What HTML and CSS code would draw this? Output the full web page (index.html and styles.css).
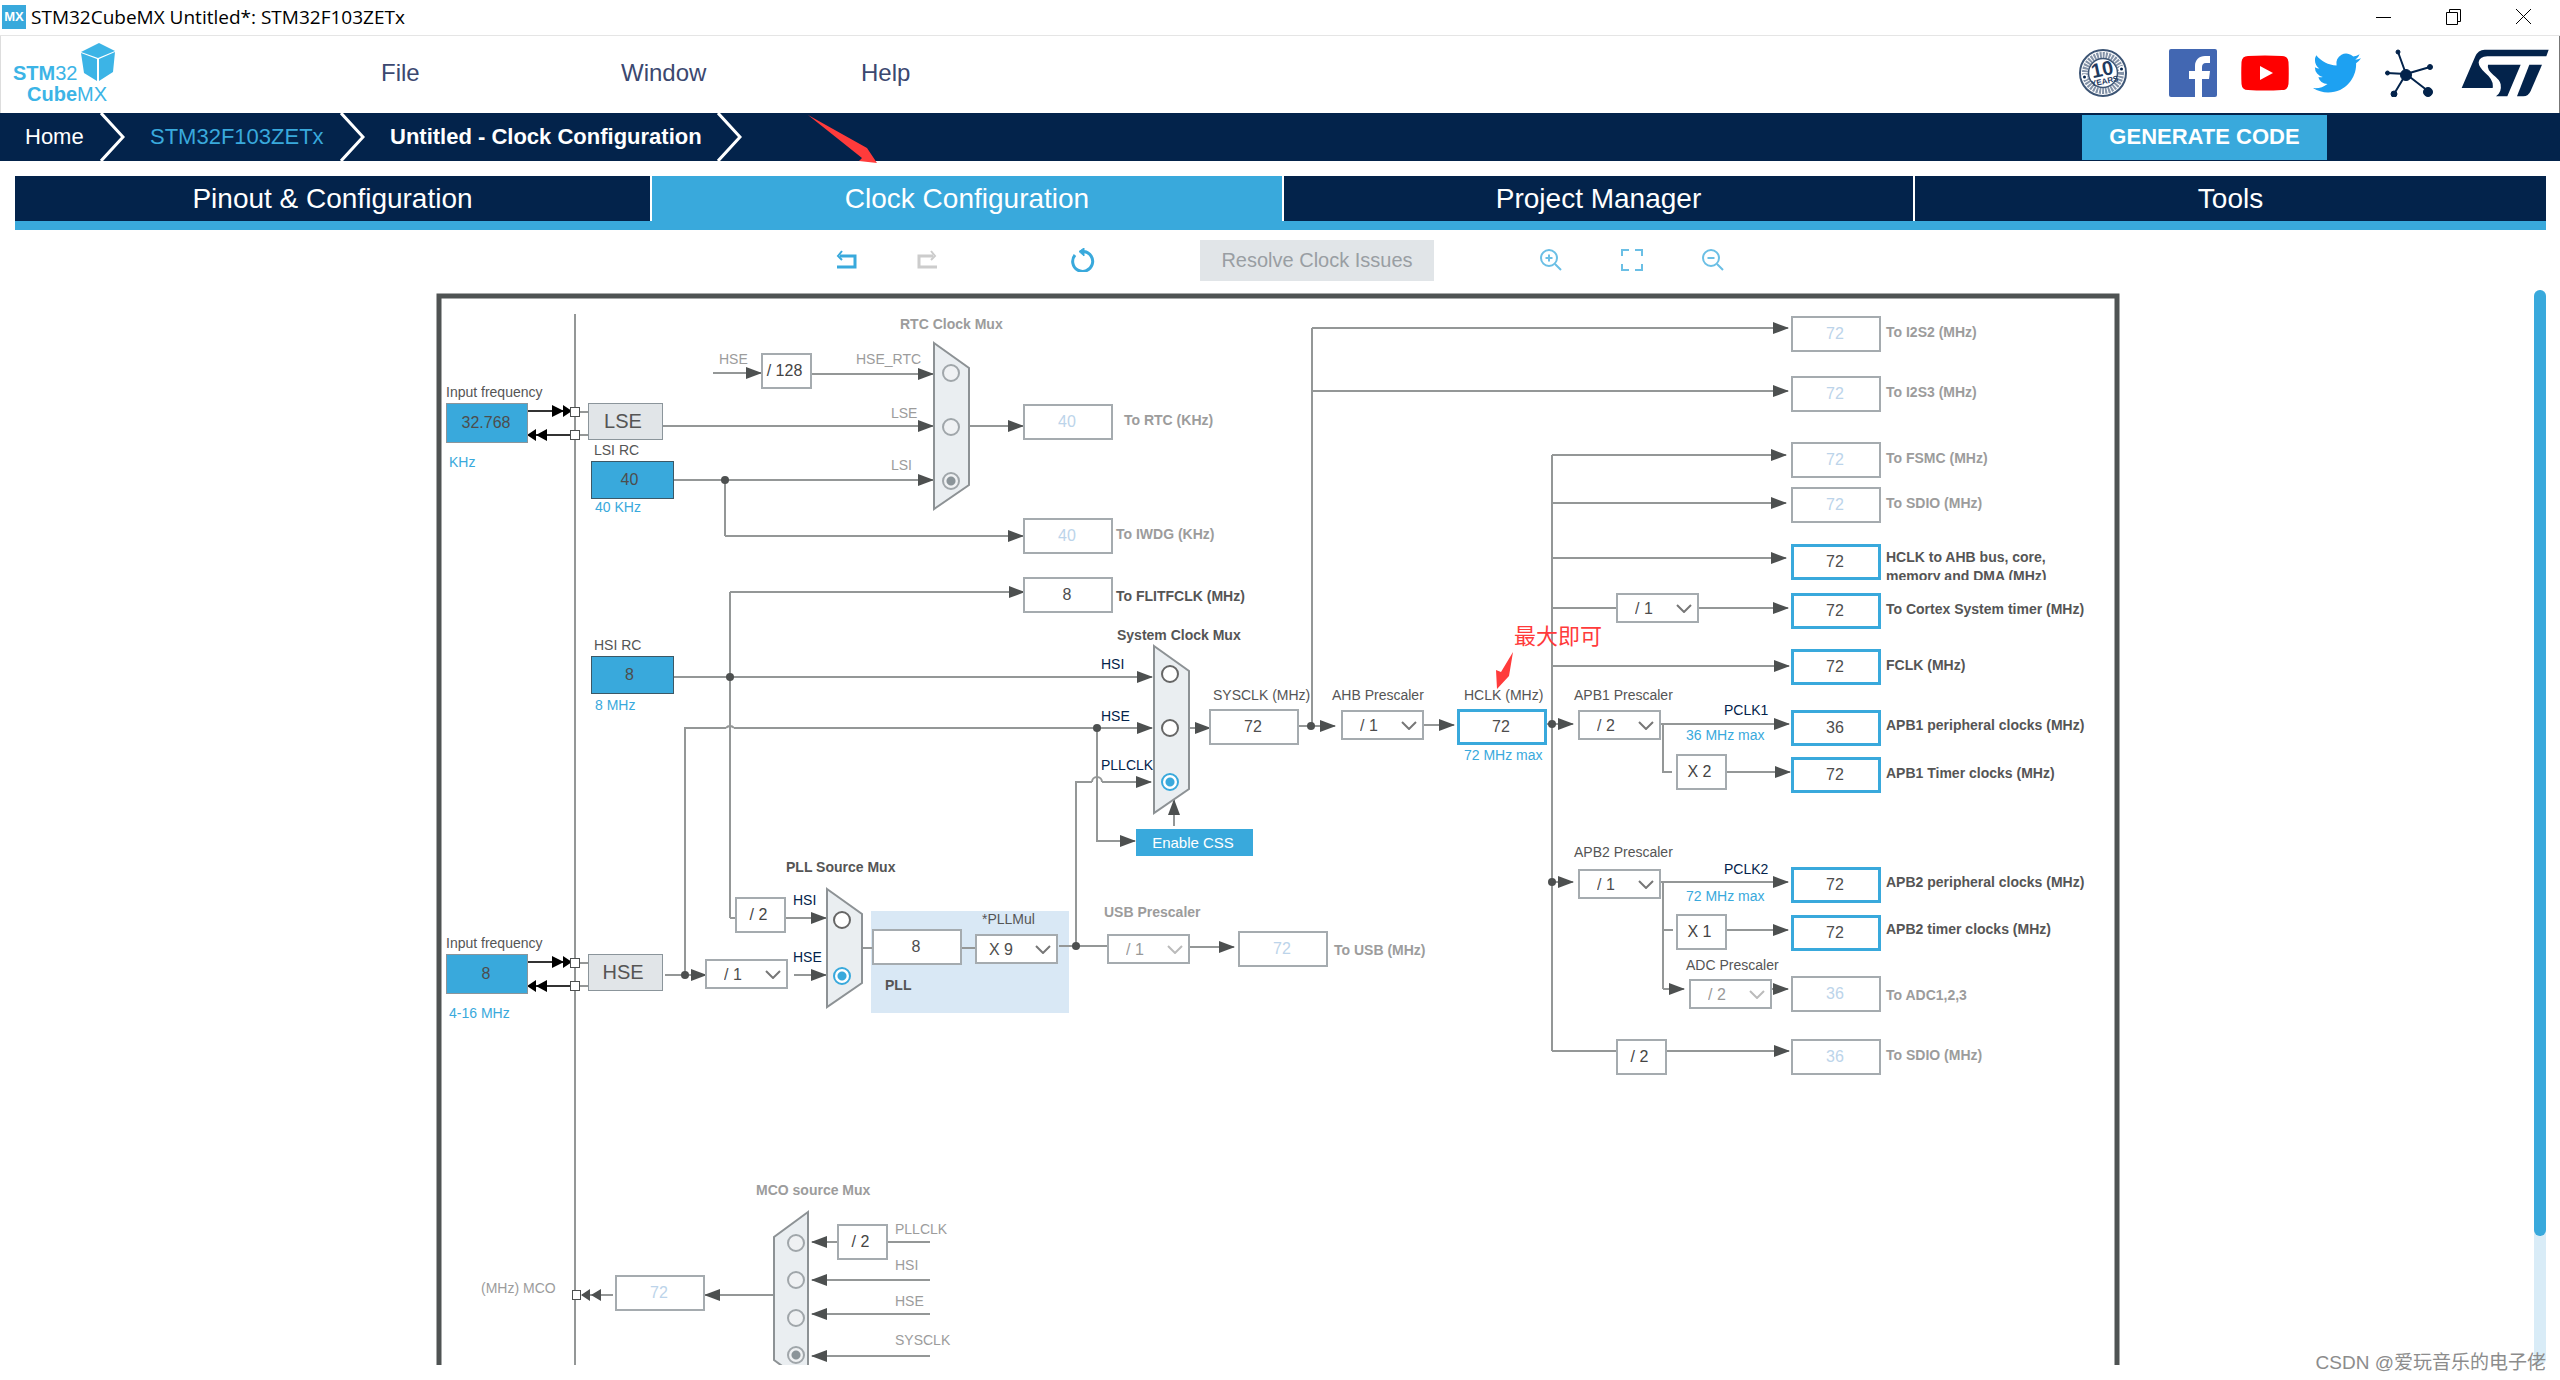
FILE: index.html
```
<!DOCTYPE html>
<html lang="en">
<head>
<meta charset="utf-8">
<title>STM32CubeMX Untitled*: STM32F103ZETx</title>
<link rel="stylesheet" href="styles.css">
</head>
<body>
<div class="app">
  <div class="titlebar">
    <span class="app-icon">MX</span>
    <span class="app-title">STM32CubeMX Untitled*: STM32F103ZETx</span>
    <div class="win-controls">
      <button aria-label="Minimize"><svg width="16" height="16"><path d="M0 8.500H15" stroke="#000" fill="none"/></svg></button>
      <button aria-label="Restore"><svg width="16" height="16"><path d="M.5 3.500H11.500V15.500H.5ZM3.500 3V.5H14.500V12.500H12" stroke="#000" fill="none"/></svg></button>
      <button aria-label="Close"><svg width="16" height="16"><path d="M0 0L15 15M15 0L0 15" stroke="#000" fill="none"/></svg></button>
    </div>
  </div>

  <header class="header">
    <a class="logo" href="#" aria-label="STM32CubeMX">
      <span class="logo-top"><b>STM</b>32</span>
      <span class="logo-bottom"><b>Cube</b>MX</span>
      <svg class="logo-cube" viewBox="0 0 34 38" width="34" height="38"><path d="M18 0L34 8 17 15 0 9Z" fill="#3cb4e6"/><path d="M0 10L16 16V38L3 30ZM34 9L18 16V38L32 29Z" fill="#3cb4e6"/></svg>
    </a>
    <nav class="menu">
      <button>File</button><button>Window</button><button>Help</button>
    </nav>
    <div class="links">
      <a class="badge" href="#" aria-label="10 years longevity commitment">
        <svg viewBox="0 0 48 48" width="48" height="48">
          <circle cx="24" cy="24" r="23" fill="#fff" stroke="#3d5575" stroke-width="2"/>
          <circle cx="24" cy="24" r="18" fill="none" stroke="#8493a8" stroke-width="6" stroke-dasharray="2 1"/>
          <circle cx="24" cy="24" r="14.500" fill="#fff" stroke="#3d5575" stroke-width="1.500"/>
          <circle cx="5.500" cy="28" r="3" fill="#fff"/><circle cx="42.500" cy="20" r="3" fill="#fff"/>
          <circle cx="5.500" cy="28" r="1.500" fill="#03234b"/><circle cx="42.500" cy="20" r="1.500" fill="#03234b"/>
          <g transform="rotate(-12 24 24)" fill="#1f3a5f" text-anchor="middle" font-family="Liberation Sans, sans-serif" font-weight="700"><text x="24" y="27" font-size="20">10</text><text x="24" y="35" font-size="8">YEARS</text></g>
        </svg>
      </a>
      <a href="#" aria-label="Facebook"><svg viewBox="0 0 48 48" width="48" height="48"><rect width="48" height="48" rx="2" fill="#4267b2"/><path d="M26 48V30H20V22H26V17C26 11 30 7 36 7H41V14H37C34 14 33 16 33 18V22H41L40 30H33V48Z" fill="#fff"/></svg></a>
      <a href="#" aria-label="YouTube"><svg viewBox="0 0 48 48" width="48" height="48"><path d="M7 7Q24 6 41 7Q47 7 47.500 13Q48 24 47.500 35Q47 41 41 41Q24 42 7 41Q1 41 .5 35Q0 24 .5 13Q1 7 7 7Z" fill="#f00"/><path d="M19 17L32 24 19 31Z" fill="#fff"/></svg></a>
      <a href="#" aria-label="Twitter"><svg viewBox="0 0 24 24" width="48" height="48"><path d="M23.953 4.57a10 10 0 01-2.825.775 4.958 4.958 0 002.163-2.723c-.951.555-2.005.959-3.127 1.184a4.92 4.92 0 00-8.384 4.482C7.69 8.095 4.067 6.13 1.64 3.162a4.822 4.822 0 00-.666 2.475c0 1.710.87 3.213 2.188 4.096a4.904 4.904 0 01-2.228-.616v.06a4.923 4.923 0 003.946 4.827 4.996 4.996 0 01-2.212.085 4.936 4.936 0 004.604 3.417 9.867 9.867 0 01-6.102 2.105c-.39 0-.779-.023-1.170-.067a13.995 13.995 0 007.557 2.209c9.053 0 13.998-7.496 13.998-13.985 0-.21 0-.42-.015-.63A9.935 9.935 0 0024 4.590z" fill="#1da1f2"/></svg></a>
      <a href="#" aria-label="ST Community"><svg viewBox="0 0 48 48" width="48" height="48" fill="#03234b" stroke="#03234b"><path d="M21 25L13 3M21 25L45 18M21 25L2 24M21 25L9 45M21 25L43 42" stroke-width="2"/><circle cx="21" cy="26" r="5.500"/><circle cx="13" cy="3" r="2"/><circle cx="45" cy="18" r="2.500"/><circle cx="2.500" cy="24" r="2"/><circle cx="9" cy="45" r="3"/><circle cx="43" cy="43" r="4.500"/></svg></a>
      <a class="st" href="#" aria-label="STMicroelectronics"><svg viewBox="1204 60 262 144" width="88" height="48" fill="#03234b"><path d="M1205 177L1246 82Q1254 63 1274 62H1466L1459 82H1282Q1258 84 1256 99Q1255 112 1276 132Q1302 153 1298 177Z"/><path d="M1284 107H1382L1342 202H1308Q1326 190 1322 166Q1320 153 1300 138Q1280 120 1284 107Z"/><path d="M1408 107H1446L1412 186Q1405 202 1390 202H1371Z"/></svg></a>
    </div>
  </header>

  <div class="crumbs">
    <a class="crumb crumb-home" href="#">Home</a>
    <svg class="sep" width="25" height="48" viewBox="0 0 25 48"><path d="M1 0L23 24 1 48" fill="none" stroke="#fff" stroke-width="3"/></svg>
    <a class="crumb crumb-mcu" href="#">STM32F103ZETx</a>
    <svg class="sep" width="25" height="48" viewBox="0 0 25 48"><path d="M1 0L23 24 1 48" fill="none" stroke="#fff" stroke-width="3"/></svg>
    <a class="crumb crumb-here" href="#">Untitled - Clock Configuration</a>
    <svg class="sep" width="25" height="48" viewBox="0 0 25 48"><path d="M1 0L23 24 1 48" fill="none" stroke="#fff" stroke-width="3"/></svg>
    <button class="generate">GENERATE CODE</button>
    <svg class="note-arrow" width="70" height="50" viewBox="0 0 70 50"><path d="M0 0L59 33 69 48 51 46 54 43Z" fill="#ff3b3b"/></svg>
  </div>

  <div class="tabs">
    <button class="tab">Pinout &amp; Configuration</button>
    <button class="tab active">Clock Configuration</button>
    <button class="tab">Project Manager</button>
    <button class="tab">Tools</button>
  </div>

  <div class="toolbar">
    <button class="tool undo" aria-label="Undo"><svg width="24" height="24" viewBox="0 0 24 24" fill="none" stroke="#39a9dc" stroke-width="3"><path d="M2 19H20V8H5"/><path d="M7 3L3 8 7 12" stroke-width="2"/></svg></button>
    <button class="tool redo" aria-label="Redo"><svg width="24" height="24" viewBox="0 0 24 24" fill="none" stroke="#ccc" stroke-width="3"><path d="M22 19H4V8H18"/><path d="M16 3L20 8 16 12" stroke-width="2"/></svg></button>
    <button class="tool reset" aria-label="Reset"><svg width="24" height="24" viewBox="0 0 24 24" fill="none" stroke="#39a9dc" stroke-width="3"><path d="M4 7A10 10 0 1 0 13 3.500"/><path d="M13 0L8 3.500 13 8Z" fill="#39a9dc" stroke-width="1"/></svg></button>
    <button class="resolve" disabled>Resolve Clock Issues</button>
    <button class="tool zin" aria-label="Zoom in"><svg width="24" height="24" viewBox="0 0 24 24" fill="none" stroke="#6bbfe5" stroke-width="2"><circle cx="10" cy="10" r="8"/><path d="M16 16L22 22M10 6.500V13.500M6.500 10H13.500"/></svg></button>
    <button class="tool fit" aria-label="Fit"><svg width="24" height="24" viewBox="0 0 24 24" fill="none" stroke="#6bbfe5" stroke-width="2"><path d="M2 8V2H9M15 2H22V8M22 16V22H15M9 22H2V16"/></svg></button>
    <button class="tool zout" aria-label="Zoom out"><svg width="24" height="24" viewBox="0 0 24 24" fill="none" stroke="#6bbfe5" stroke-width="2"><circle cx="10" cy="10" r="8"/><path d="M16 16L22 22M6.500 10H13.500"/></svg></button>
  </div>

  <main class="workspace">
    <div class="canvas">
      <svg class="wires" width="1760" height="1075" viewBox="0 0 1760 1075">
        <defs>
          <marker id="ar" viewBox="0 0 16 12" markerWidth="16" markerHeight="12" refX="15" refY="6" orient="auto" markerUnits="userSpaceOnUse"><path d="M0 0L16 6 0 12Z" fill="#4d5050"/></marker>
        </defs>
        <path class="frame" d="M39 1075V6H1717V1075"/>
        <rect x="471" y="621" width="198" height="102" fill="#d9e8f5"/>
        <g class="wire">
          <path d="M175 24V1075M175 122H188M175 145H188M175 673H188M175 696H188"/>
          <path d="M325 190V246M330 628H336M330 302V628M285 685V438H326M334 438H697M326 438A5 5 0 0 1 334 438"/>
          <path d="M462 658H472M561 658H576M659 656H707M676 656V492H692M692 492A5 5 0 0 1 702 492"/>
          <path d="M912 436V38M1152 761V165M1152 761H1216M1152 318H1216M1263 434V482H1272M1263 592V699M1263 640H1273M488 952H530M213 1005H182"/>
        </g>
        <g class="wire go">
          <path d="M313 83H361"/><path d="M412 84H533"/><path d="M263 136H533"/><path d="M274 190H533"/><path d="M325 246H623"/><path d="M330 302H624"/><path d="M569 136H623"/>
          <path d="M274 387H752"/><path d="M697 438H752"/><path d="M702 492H751"/><path d="M697 438V551H735"/><path d="M774 536V510"/>
          <path d="M789 438H810"/><path d="M899 436H935"/><path d="M1024 435H1054"/><path d="M1147 434H1173"/><path d="M1152 592H1173"/>
          <path d="M912 38H1388"/><path d="M912 101H1388"/><path d="M1152 165H1386"/><path d="M1152 213H1386"/><path d="M1152 268H1386"/><path d="M1299 318H1388"/><path d="M1152 376H1389"/>
          <path d="M1261 434H1389"/><path d="M1327 482H1390"/><path d="M1261 592H1388"/><path d="M1327 640H1388"/><path d="M1263 699H1284"/><path d="M1372 699H1388"/><path d="M1267 761H1389"/>
          <path d="M265 685H306"/><path d="M394 685H426"/><path d="M386 628H426"/><path d="M790 657H834"/>
          <path d="M438 952H412"/><path d="M530 990H412"/><path d="M530 1024H412"/><path d="M530 1066H412"/><path d="M374 1005H305"/>
        </g>
        <g fill="#4d5050"><circle cx="325" cy="190" r="4"/><circle cx="330" cy="387" r="4"/><circle cx="285" cy="685" r="4"/><circle cx="676" cy="656" r="4"/><circle cx="697" cy="438" r="4"/><circle cx="911" cy="436" r="4"/><circle cx="1152" cy="434" r="4"/><circle cx="1152" cy="592" r="4"/><path d="M190 999L181 1005 190 1011ZM201 999L191 1005 201 1011Z"/></g>
        <g stroke="#333" stroke-width="2"><path d="M128 121H165M128 672H165M171 145H135M171 696H135"/></g>
        <path d="M152 115L164 121 152 127ZM163 115L172 121 163 127ZM147 139L136 145 147 151ZM136 139L127 145 136 151ZM152 666L164 672 152 678ZM163 666L172 672 163 678ZM147 690L136 696 147 702ZM136 690L127 696 136 702Z"/>
        <g fill="#fff" stroke="#4d5050"><rect x="170.500" y="117.500" width="9" height="9"/><rect x="170.500" y="140.500" width="9" height="9"/><rect x="170.500" y="668.500" width="9" height="9"/><rect x="170.500" y="691.500" width="9" height="9"/><rect x="172.500" y="1000.500" width="8" height="9"/></g>
        <g class="mux">
          <path d="M534 53L569 78V195L534 219Z"/><path d="M754 356L789 381V499L754 523Z"/><path d="M427 599L462 624V693L427 717Z"/><path d="M408 922L374 947V1070L408 1095Z"/>
        </g>
        <path d="M1113 362L1109 386 1097 399 1096 380 1101 382Z" fill="#ff3b3b"/>
      </svg>

      <label class="t" for="lse-in" style="--x:46;--y:102">Input frequency</label>
      <input class="val src" id="lse-in" value="32.768" style="--x:46;--y:113">
      <span class="t blue" style="--x:49;--y:172">KHz</span>
      <button class="osc" style="--x:188;--y:113">LSE</button>
      <label class="t" for="lsi" style="--x:194;--y:160">LSI RC</label>
      <input class="val rc" id="lsi" value="40" readonly style="--x:191;--y:171">
      <span class="t blue" style="--x:195;--y:217">40 KHz</span>
      <label class="t" for="hsi" style="--x:194;--y:355">HSI RC</label>
      <input class="val rc" id="hsi" value="8" readonly style="--x:191;--y:366">
      <span class="t blue" style="--x:195;--y:415">8 MHz</span>
      <label class="t" for="hse-in" style="--x:46;--y:653">Input frequency</label>
      <input class="val src" id="hse-in" value="8" style="--x:46;--y:664">
      <span class="t blue" style="--x:49;--y:723">4-16 MHz</span>
      <button class="osc" style="--x:188;--y:664">HSE</button>

      <span class="t gray" style="--x:319;--y:69">HSE</span>
      <span class="div" style="--x:361;--y:63">/ 128</span>
      <span class="t gray b" style="--x:500;--y:34">RTC Clock Mux</span>
      <label class="t gray" for="rtc1" style="--x:456;--y:69">HSE_RTC</label>
      <label class="t gray" for="rtc2" style="--x:491;--y:123">LSE</label>
      <label class="t gray" for="rtc3" style="--x:491;--y:175">LSI</label>
      <input type="radio" name="rtc" id="rtc1" disabled style="--x:542;--y:74">
      <input type="radio" name="rtc" id="rtc2" disabled style="--x:542;--y:128">
      <input type="radio" name="rtc" id="rtc3" disabled checked style="--x:542;--y:182">
      <input class="val" id="o-rtc" value="40" disabled style="--x:623;--y:114">
      <label class="t gray b" for="o-rtc" style="--x:724;--y:130">To RTC (KHz)</label>
      <input class="val" id="o-iwdg" value="40" disabled style="--x:623;--y:228">
      <label class="t gray b" for="o-iwdg" style="--x:716;--y:244">To IWDG (KHz)</label>
      <input class="val" id="o-flit" value="8" readonly style="--x:623;--y:287">
      <label class="t b" for="o-flit" style="--x:716;--y:306">To FLITFCLK (MHz)</label>

      <span class="t b" style="--x:717;--y:345">System Clock Mux</span>
      <label class="t navy" for="sys1" style="--x:701;--y:374">HSI</label>
      <label class="t navy" for="sys2" style="--x:701;--y:426">HSE</label>
      <label class="t navy" for="sys3" style="--x:701;--y:475">PLLCLK</label>
      <input type="radio" name="sys" id="sys1" style="--x:761;--y:375">
      <input type="radio" name="sys" id="sys2" style="--x:761;--y:429">
      <input type="radio" name="sys" id="sys3" checked style="--x:761;--y:483">
      <button class="css" style="--x:736;--y:539">Enable CSS</button>

      <label class="t" for="sysclk" style="--x:813;--y:405">SYSCLK (MHz)</label>
      <input class="val" id="sysclk" value="72" readonly style="--x:809;--y:419">
      <label class="t" for="ahb" style="--x:932;--y:405">AHB Prescaler</label>
      <select id="ahb" style="--x:941;--y:420"><option>/ 1</option></select>
      <label class="t" for="hclk" style="--x:1064;--y:405">HCLK (MHz)</label>
      <input class="val hot" id="hclk" value="72" style="--x:1057;--y:419">
      <span class="t blue" style="--x:1064;--y:465">72 MHz max</span>
      <span class="note" style="--x:1114;--y:344">最大即可</span>

      <span class="t b" style="--x:386;--y:577">PLL Source Mux</span>
      <span class="div" style="--x:335;--y:607">/ 2</span>
      <label class="t navy" for="pll1" style="--x:393;--y:610">HSI</label>
      <label class="t navy" for="pll2" style="--x:393;--y:667">HSE</label>
      <input type="radio" name="pll" id="pll1" style="--x:433;--y:621">
      <input type="radio" name="pll" id="pll2" checked style="--x:433;--y:677">
      <select aria-label="HSE divider" style="--x:305;--y:669"><option>/ 1</option></select>
      <input class="val" id="pllin" value="8" readonly style="--x:472;--y:639">
      <label class="t" for="pllmul" style="--x:582;--y:629">*PLLMul</label>
      <select id="pllmul" class="mul" style="--x:575;--y:644"><option>X 9</option></select>
      <label class="t b" for="pllin" style="--x:485;--y:695">PLL</label>
      <label class="t gray b" for="usbp" style="--x:704;--y:622">USB Prescaler</label>
      <select id="usbp" disabled style="--x:707;--y:644"><option>/ 1</option></select>
      <input class="val" id="o-usb" value="72" disabled style="--x:838;--y:641">
      <label class="t gray b" for="o-usb" style="--x:934;--y:660">To USB (MHz)</label>

      <input class="val" id="o1" value="72" disabled style="--x:1391;--y:26">
      <label class="t gray b" for="o1" style="--x:1486;--y:42">To I2S2 (MHz)</label>
      <input class="val" id="o2" value="72" disabled style="--x:1391;--y:86">
      <label class="t gray b" for="o2" style="--x:1486;--y:102">To I2S3 (MHz)</label>
      <input class="val" id="o3" value="72" disabled style="--x:1391;--y:152">
      <label class="t gray b" for="o3" style="--x:1486;--y:168">To FSMC (MHz)</label>
      <input class="val" id="o4" value="72" disabled style="--x:1391;--y:197">
      <label class="t gray b" for="o4" style="--x:1486;--y:213">To SDIO (MHz)</label>
      <input class="val hot" id="o5" value="72" readonly style="--x:1391;--y:254">
      <label class="t b clip" for="o5" style="--x:1486;--y:267">HCLK to AHB bus, core, memory and DMA (MHz)</label>
      <select aria-label="Cortex prescaler" style="--x:1216;--y:303"><option>/ 1</option></select>
      <input class="val hot" id="o6" value="72" readonly style="--x:1391;--y:303">
      <label class="t b" for="o6" style="--x:1486;--y:319">To Cortex System timer (MHz)</label>
      <input class="val hot" id="o7" value="72" readonly style="--x:1391;--y:359">
      <label class="t b" for="o7" style="--x:1486;--y:375">FCLK (MHz)</label>

      <label class="t" for="apb1" style="--x:1174;--y:405">APB1 Prescaler</label>
      <select id="apb1" style="--x:1178;--y:420"><option>/ 2</option></select>
      <span class="t navy" style="--x:1324;--y:420">PCLK1</span>
      <span class="t blue" style="--x:1286;--y:445">36 MHz max</span>
      <input class="val hot" id="o8" value="36" readonly style="--x:1391;--y:420">
      <label class="t b" for="o8" style="--x:1486;--y:435">APB1 peripheral clocks (MHz)</label>
      <span class="div" style="--x:1276;--y:464">X 2</span>
      <input class="val hot" id="o9" value="72" readonly style="--x:1391;--y:467">
      <label class="t b" for="o9" style="--x:1486;--y:483">APB1 Timer clocks (MHz)</label>

      <label class="t" for="apb2" style="--x:1174;--y:562">APB2 Prescaler</label>
      <select id="apb2" style="--x:1178;--y:579"><option>/ 1</option></select>
      <span class="t navy" style="--x:1324;--y:579">PCLK2</span>
      <span class="t blue" style="--x:1286;--y:606">72 MHz max</span>
      <input class="val hot" id="o10" value="72" readonly style="--x:1391;--y:577">
      <label class="t b" for="o10" style="--x:1486;--y:592">APB2 peripheral clocks (MHz)</label>
      <span class="div" style="--x:1276;--y:624">X 1</span>
      <input class="val hot" id="o11" value="72" readonly style="--x:1391;--y:625">
      <label class="t b" for="o11" style="--x:1486;--y:639">APB2 timer clocks (MHz)</label>
      <label class="t" for="adc" style="--x:1286;--y:675">ADC Prescaler</label>
      <select id="adc" disabled style="--x:1289;--y:689"><option>/ 2</option></select>
      <input class="val" id="o12" value="36" disabled style="--x:1391;--y:686">
      <label class="t gray b" for="o12" style="--x:1486;--y:705">To ADC1,2,3</label>
      <span class="div" style="--x:1216;--y:749">/ 2</span>
      <input class="val" id="o13" value="36" disabled style="--x:1391;--y:749">
      <label class="t gray b" for="o13" style="--x:1486;--y:765">To SDIO (MHz)</label>

      <span class="t gray b" style="--x:356;--y:900">MCO source Mux</span>
      <span class="div" style="--x:437;--y:934">/ 2</span>
      <label class="t gray" for="mco1" style="--x:495;--y:939">PLLCLK</label>
      <label class="t gray" for="mco2" style="--x:495;--y:975">HSI</label>
      <label class="t gray" for="mco3" style="--x:495;--y:1011">HSE</label>
      <label class="t gray" for="mco4" style="--x:495;--y:1050">SYSCLK</label>
      <input type="radio" name="mco" id="mco1" disabled style="--x:387;--y:944">
      <input type="radio" name="mco" id="mco2" disabled style="--x:387;--y:981">
      <input type="radio" name="mco" id="mco3" disabled style="--x:387;--y:1019">
      <input type="radio" name="mco" id="mco4" disabled checked style="--x:387;--y:1056">
      <label class="t gray" for="o-mco" style="--x:81;--y:998">(MHz) MCO</label>
      <input class="val" id="o-mco" value="72" disabled style="--x:215;--y:985">
    </div>
    <div class="scrollbar"><div class="thumb"></div></div>
  </main>
  <div class="watermark">CSDN @爱玩音乐的电子佬</div>
</div>
</body>
</html>
```

FILE: styles.css
```
* { box-sizing: border-box; }
body {
  margin: 0;
  background: #fff;
  color: #555;
  font-family: "Liberation Sans", "Noto Sans CJK SC", sans-serif;
}
button { font: inherit; color: inherit; border: 0; padding: 0; background: none; }
a { text-decoration: none; }
svg { display: block; }

.app {
  position: relative;
  min-height: 100vh;
  overflow: hidden;
}

/* window title */
.titlebar {
  display: flex;
  align-items: center;
  height: 36px;
  padding: 0 28px 2px 2px;
  border-bottom: 1px solid #e5e5e5;
  color: #000;
}
.app-icon {
  width: 24px;
  height: 24px;
  background: #39a9dc;
  color: #fff;
  font-size: 13px;
  font-weight: 700;
  line-height: 24px;
  text-align: center;
}
.app-title {
  margin-left: 5px;
  font-family: "Open Sans", sans-serif;
  font-size: 19px;
  line-height: 24px;
}
.win-controls { display: flex; gap: 54px; margin-left: auto; }

/* header */
.header {
  display: flex;
  align-items: center;
  height: 77px;
  padding: 0 10px 3px 12px;
  border-left: 1px solid #ddd;
  border-right: 1px solid #777;
}
.logo {
  position: relative;
  display: flex;
  flex-direction: column;
  width: 102px;
  height: 61px;
  padding-top: 20px;
  color: #3cb4e6;
  font-size: 20px;
  line-height: 21px;
}
.logo-bottom { padding-left: 14px; }
.logo-cube { position: absolute; right: 0; top: 0; }
.menu {
  display: grid;
  grid-template-columns: repeat(3, 240px);
  margin-left: 266px;
  color: #3b4870;
  font-size: 24px;
}
.menu button { text-align: left; }
.links { display: flex; align-items: center; gap: 24px; margin-left: auto; }
.badge { margin-right: 18px; }
.st { margin-left: 4px; }

/* breadcrumb */
.crumbs {
  position: relative;
  display: flex;
  align-items: center;
  height: 48px;
  padding: 0 233px 0 25px;
  background: #03234b;
  font-size: 22px;
}
.crumb { color: #fff; }
.crumb-home { width: 75px; }
.crumb-mcu { width: 215px; padding-left: 25px; color: #39a9dc; }
.crumb-here { width: 352px; padding-left: 25px; font-weight: 700; white-space: nowrap; }
.generate {
  width: 245px;
  height: 45px;
  margin-left: auto;
  background: #39a9dc;
  color: #fff;
  font-weight: 700;
}
.note-arrow { position: absolute; left: 808px; top: 2px; }

/* tabs */
.tabs {
  display: grid;
  grid-template-columns: 637fr 632fr 631fr 631fr;
  margin: 15px 14px 0 15px;
  border-bottom: 9px solid #39a9dc;
}
.tab {
  height: 45px;
  padding-top: 1px;
  border-right: 2px solid #fff;
  background: #03234b;
  color: #fff;
  font-size: 28px;
}
.tab:last-child { border-right: 0; }
.tab.active { background: #39a9dc; }

/* toolbar */
.toolbar {
  display: flex;
  justify-content: center;
  align-items: center;
  height: 60px;
}
.tool { width: 24px; height: 24px; }
.redo { margin-left: 56px; }
.reset { margin-left: 132px; }
.resolve {
  width: 234px;
  height: 41px;
  margin: 0 105px;
  background: #e1e5e8;
  color: #999ea3;
  font-size: 20px;
}
.fit, .zout { margin-left: 57px; }

/* clock diagram */
.workspace {
  display: grid;
  grid-template-columns: 1fr auto 1fr;
  padding-bottom: 15px;
}
.canvas {
  grid-column: 2;
  position: relative;
  width: 1760px;
  height: 1075px;
  overflow: hidden;
  font-size: 14px;
}
.canvas > :not(svg) {
  position: absolute;
  left: calc(var(--x) * 1px);
  top: calc(var(--y) * 1px);
  margin: 0;
}
.frame { fill: none; stroke: #4f5353; stroke-width: 5px; }
.wire { fill: none; stroke: #949797; stroke-width: 2px; }
.go path { marker-end: url(#ar); }
.mux { fill: #eaeef1; stroke: #8d9295; stroke-width: 2px; }

.t { line-height: 18px; translate: 0 -9px; white-space: nowrap; }
.b { font-weight: 700; }
.gray { color: #9c9c9c; }
.canvas .blue { color: #39a9dc; }
.navy { color: #03234b; }
.canvas .clip { width: 180px; height: 32px; line-height: 19px; overflow: hidden; white-space: normal; }

.val {
  width: 90px;
  height: 36px;
  padding: 0 2px 0 0;
  border: 2px solid #a5abaf;
  border-radius: 0;
  background: #fff;
  color: #4d4d4d;
  font: 16px "Liberation Sans", sans-serif;
  text-align: center;
}
.val:disabled { color: #bcd4ea; }
.hot { border: 3px solid #39a9dc; }
.src { width: 82px; height: 40px; border: 1px solid #8b959b; background: #39a9dc; }
.rc { width: 83px; height: 38px; padding-right: 6px; border: 1px solid #3c5866; background: #39a9dc; }
.div {
  width: 51px;
  height: 36px;
  padding-right: 4px;
  border: 2px solid #a5abaf;
  background: #fff;
  color: #444;
  font-size: 16px;
  line-height: 32px;
  text-align: center;
}
.osc {
  width: 75px;
  height: 37px;
  padding-right: 5px;
  border: 1px solid #8b959b;
  background: #e1e5e8;
  color: #555;
  font-size: 20px;
}
.css { width: 117px; height: 27px; padding-right: 3px; background: #39a9dc; color: #fff; font-size: 15px; }
select {
  appearance: none;
  width: 83px;
  height: 30px;
  padding: 0 0 0 17px;
  border: 2px solid #a5abaf;
  border-radius: 0;
  background: #fff url("data:image/svg+xml,%3Csvg xmlns='http://www.w3.org/2000/svg' width='16' height='9'%3E%3Cpath d='M1 1L8 8 15 1' fill='none' stroke='%23777' stroke-width='2'/%3E%3C/svg%3E") no-repeat right 5px center;
  color: #4d4d4d;
  font: 16px "Liberation Sans", sans-serif;
}
select:disabled {
  background-image: url("data:image/svg+xml,%3Csvg xmlns='http://www.w3.org/2000/svg' width='16' height='9'%3E%3Cpath d='M1 1L8 8 15 1' fill='none' stroke='%23bbb' stroke-width='2'/%3E%3C/svg%3E");
  color: #999;
  opacity: 1;
}
.mul { padding-left: 12px; }
input[type="radio"] {
  appearance: none;
  width: 18px;
  height: 18px;
  border: 2px solid #666;
  border-radius: 50%;
  background: #fff;
}
input[type="radio"]:checked {
  border-color: #39a9dc;
  background: radial-gradient(circle, #39a9dc 4px, #fff 5px);
}
input[type="radio"]:disabled { border-color: #a0a6aa; background: #eff1f3; }
input[type="radio"]:disabled:checked { background: radial-gradient(circle, #8b9499 4px, #eff1f3 5px); }
.note { color: #ff3b3b; font: 22px/30px "Noto Sans CJK SC", sans-serif; translate: 0 -15px; white-space: nowrap; }

.scrollbar {
  grid-column: 3;
  justify-self: end;
  width: 12px;
  margin-right: 14px;
  border-radius: 6px;
  background: #d9ecf7;
}
.thumb { height: 88%; border-radius: 6px; background: #39a9dc; }

.watermark {
  position: absolute;
  right: 14px;
  bottom: 6px;
  color: #8c8c8c;
  font-size: 19px;
}
```
